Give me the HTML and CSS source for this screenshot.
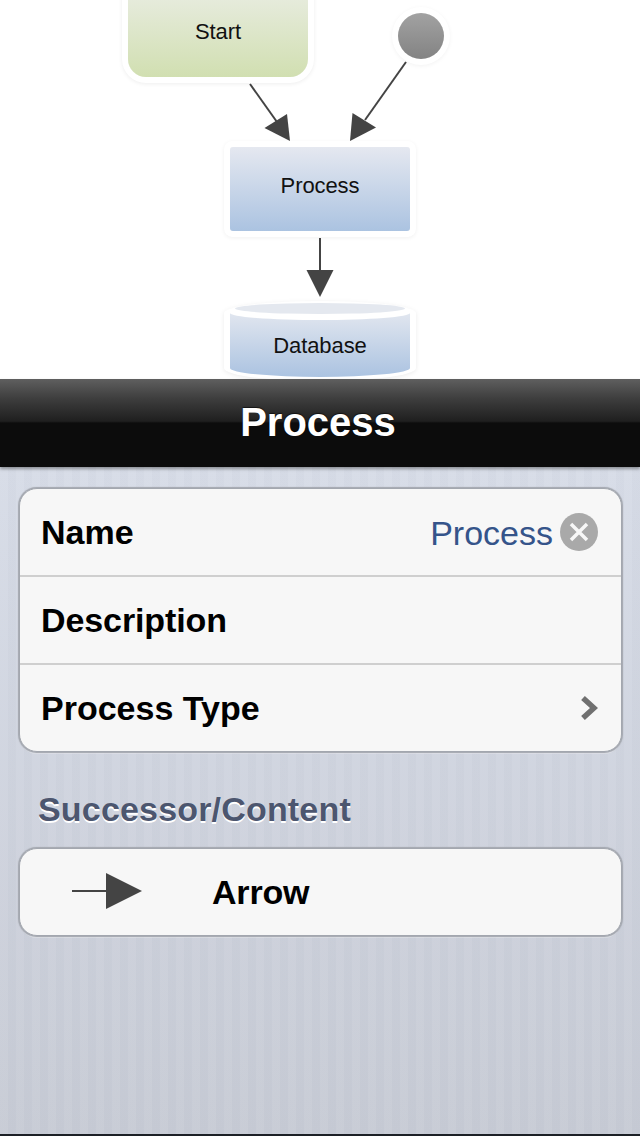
FILE: index.html
```html
<!DOCTYPE html>
<html lang="en">
<head>
<meta charset="utf-8">
<title>Process</title>
<link rel="stylesheet" href="styles.css">
</head>
<body>
<div class="app">
  <section class="canvas">
    <svg class="edges" width="640" height="379" viewBox="0 0 640 379" aria-hidden="true">
      <path class="edge" d="M250 84 L277 122"/>
      <polygon class="head" points="290,141 264.500,128 287,114"/>
      <path class="edge" d="M406 62 L365 120"/>
      <polygon class="head" points="350,141 352.500,113 376,127.500"/>
      <path class="edge" d="M320 238 L320 272"/>
      <polygon class="head" points="320,297 306.500,270 333.500,270"/>
    </svg>
    <div class="node start">Start</div>
    <div class="node dot"></div>
    <div class="node process">Process</div>
    <div class="node database">
      <svg class="cyl" width="192" height="80" viewBox="0 0 192 80" aria-hidden="true">
        <defs>
          <linearGradient id="cylBody" x1="0" y1="0" x2="0" y2="1">
            <stop offset="0" stop-color="#e1e6ef"/>
            <stop offset="1" stop-color="#abc3e1"/>
          </linearGradient>
        </defs>
        <path class="cyl-halo" d="M0 13 A96 12 0 0 1 192 13 V68 A96 13 0 0 1 0 68 Z"/>
        <ellipse cx="96" cy="8.500" rx="85" ry="5.500" fill="#e4e8ef"/>
        <path d="M6 13 A90 7 0 0 0 186 13 V68 A90 9 0 0 1 6 68 Z" fill="url(#cylBody)"/>
      </svg>
      <span class="cyl-label">Database</span>
    </div>
  </section>

  <header class="navbar"><h1 class="title">Process</h1></header>

  <main class="panel">
    <div class="card">
      <div class="row">
        <span class="label">Name</span>
        <span class="value">Process</span>
        <svg class="clear" width="38" height="38" viewBox="0 0 38 38" aria-hidden="true">
          <circle cx="19" cy="19" r="19" fill="#a9a9a9"/>
          <path d="M11 11 L27 27 M27 11 L11 27" stroke="#f7f7f7" stroke-width="3.500" fill="none"/>
        </svg>
      </div>
      <div class="row"><span class="label label-tight">Description</span></div>
      <div class="row">
        <span class="label">Process Type</span>
        <svg class="chevron" width="18" height="26" viewBox="0 0 18 26" aria-hidden="true">
          <path d="M3 3 L14 13 L3 23" stroke="#707070" stroke-width="5.500" fill="none"/>
        </svg>
      </div>
    </div>

    <h2 class="section-title">Successor/Content</h2>

    <div class="card">
      <div class="row arrow-row">
        <svg class="arrow-icon" width="72" height="38" viewBox="0 0 72 38" aria-hidden="true">
          <path d="M0 19 H36" stroke="#444" stroke-width="2" fill="none"/>
          <polygon points="34,1 70,19 34,37" fill="#444"/>
        </svg>
        <span class="label">Arrow</span>
      </div>
    </div>
  </main>
</div>
</body>
</html>
```
FILE: styles.css
```css
* { box-sizing: border-box; }

html, body {
  margin: 0;
  padding: 0;
}

body {
  width: 640px;
  height: 1136px;
  overflow: hidden;
  background: #fff;
  font-family: "Liberation Sans", Arial, sans-serif;
}

.app {
  display: flex;
  flex-direction: column;
  height: 1136px;
}

/* Diagram: free canvas */
.canvas {
  position: relative;
  flex: 0 0 379px;
  background: #fff;
  overflow: hidden;
}

.edges {
  position: absolute;
  left: 0;
  top: 0;
}

.edge {
  stroke: #444;
  stroke-width: 2;
  fill: none;
}

.head { fill: #444; }

.node {
  position: absolute;
  display: flex;
  align-items: center;
  justify-content: center;
  font-size: 22px;
  letter-spacing: -0.1px;
  color: #111;
}

.start {
  left: 128px;
  top: -20px;
  width: 180px;
  height: 97px;
  padding-top: 6px;
  border-radius: 18px;
  background: linear-gradient(#ebeee6, #d1dfb1);
  box-shadow: 0 0 0 6px #fff, 0 1px 4px 6px rgba(0, 0, 0, 0.07);
}

.dot {
  left: 398px;
  top: 13px;
  width: 46px;
  height: 46px;
  border-radius: 50%;
  background: linear-gradient(#a2a2a2, #838383);
  box-shadow: 0 0 0 6px #fff, 0 1px 4px 6px rgba(0, 0, 0, 0.05);
}

.process {
  left: 230px;
  top: 147px;
  width: 180px;
  height: 84px;
  padding-bottom: 6px;
  border-radius: 3px;
  background: linear-gradient(#e5e8f0, #abc3e1);
  box-shadow: 0 0 0 6px #fff, 0 1px 4px 6px rgba(0, 0, 0, 0.06);
}

.database {
  left: 224px;
  top: 300px;
  width: 192px;
  height: 80px;
}

.cyl {
  position: absolute;
  left: 0;
  top: 0;
  overflow: visible;
}

.cyl-halo {
  fill: #fff;
  filter: drop-shadow(0 1px 2px rgba(0, 0, 0, 0.08));
}

.cyl-label {
  position: relative;
  top: 6px;
}

/* Navigation bar */
.navbar {
  flex: 0 0 88px;
  display: flex;
  align-items: center;
  justify-content: center;
  background: linear-gradient(#5f5f5f 0, #3e3e3e 22%, #1f1f1f 48%, #0c0c0c 50%, #0c0c0c 100%);
  box-shadow: 0 2px 3px rgba(0, 0, 0, 0.35);
  position: relative;
  z-index: 1;
}

.title {
  margin: 0 4px 2px 0;
  font-size: 40px;
  font-weight: bold;
  color: #fff;
  text-shadow: 0 -1px 1px rgba(0, 0, 0, 0.6);
}

/* Settings panel */
.panel {
  flex: 1;
  padding: 21px 18px 0 19px;
  border-bottom: 2px solid #1c2026;
  background:
    repeating-linear-gradient(90deg, rgba(255, 255, 255, 0.03) 0 8px, rgba(110, 120, 140, 0.025) 8px 16px),
    linear-gradient(#d7dce7, #c7cbd5);
}

.card {
  border-radius: 18px;
  background: #f7f7f7;
  border: 1px solid #a3a7af;
  box-shadow: 0 0 1px 0.5px #a3a7af, 0 2px 0 rgba(255, 255, 255, 0.35);
  overflow: hidden;
}

.row {
  display: flex;
  align-items: center;
  height: 88px;
  padding: 0 24px 0 21px;
  border-top: 2px solid #cfcfcf;
}

.row:first-child {
  height: 86px;
  border-top: 0;
}

.label {
  font-size: 34px;
  font-weight: bold;
  color: #000;
}

.label-tight {
  letter-spacing: -0.1px;
}

.value {
  margin-left: auto;
  padding-top: 2px;
  font-size: 34px;
  color: #35548a;
}

.clear {
  margin-left: 7px;
  margin-right: -1px;
  flex: none;
}

.chevron {
  margin-left: auto;
  margin-right: -1px;
  flex: none;
}

.section-title {
  margin: 37px 0 19px 19px;
  font-size: 34px;
  line-height: 40px;
  font-weight: bold;
  letter-spacing: 0.18px;
  color: #4c566f;
  text-shadow: 0 2px 0 #fff;
}

.arrow-row {
  padding-left: 52px;
  gap: 68px;
}

.arrow-icon {
  flex: none;
  margin-bottom: 2px;
}

.arrow-row .label {
  letter-spacing: -0.2px;
}
```
